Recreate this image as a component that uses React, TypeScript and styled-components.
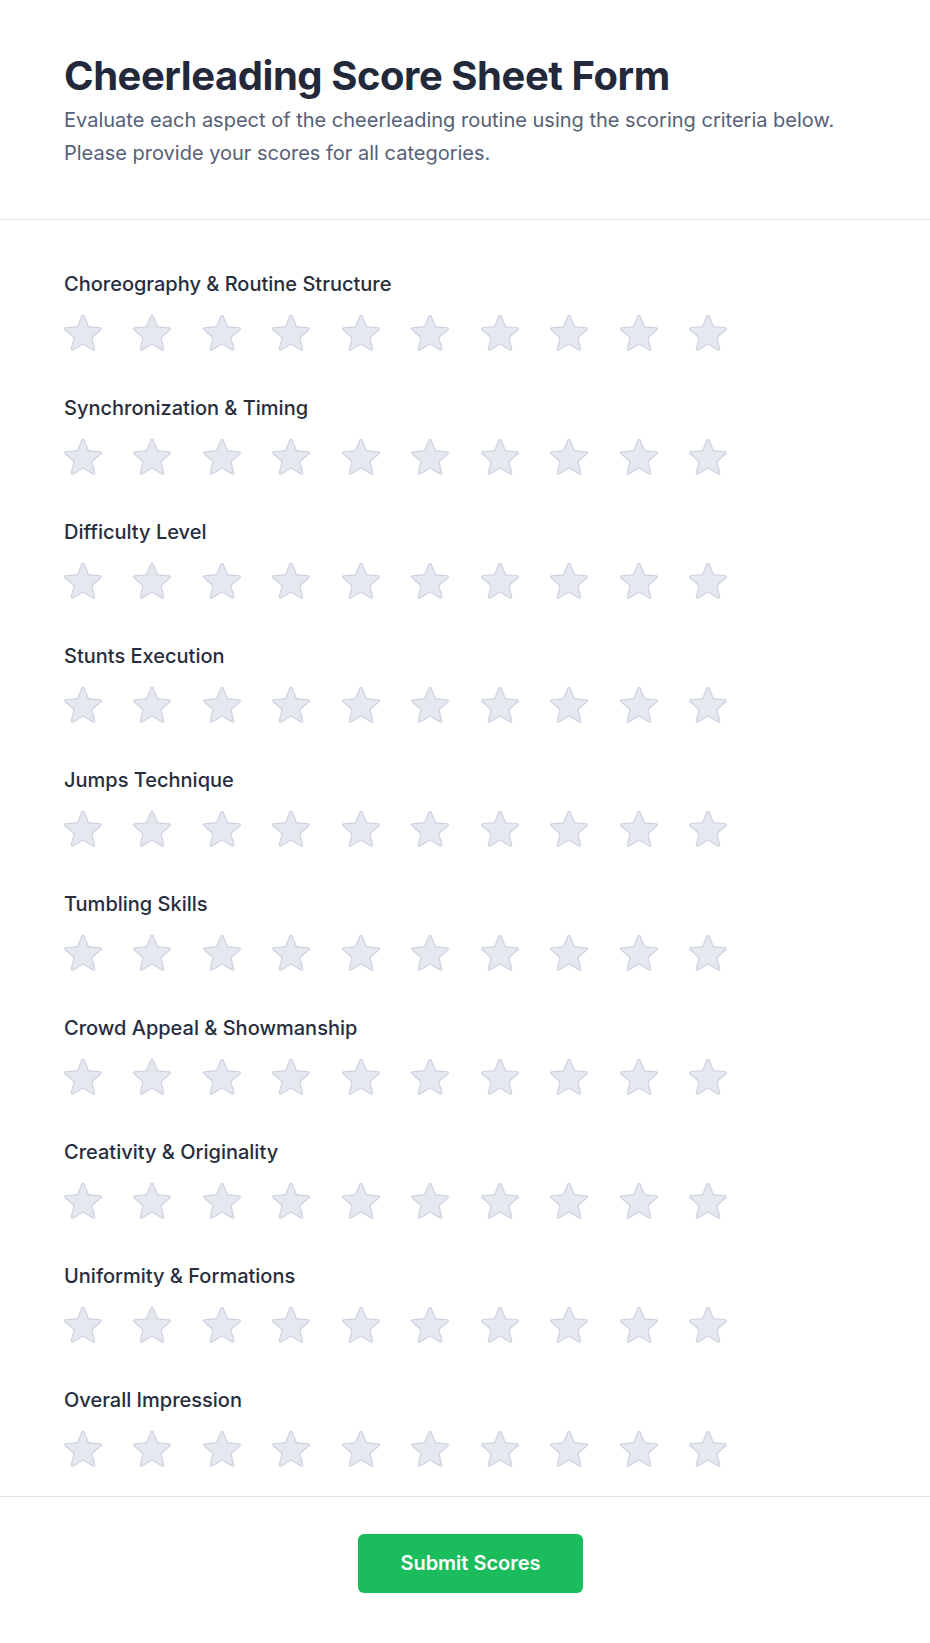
import React from 'react';
import styled, { createGlobalStyle } from 'styled-components';

const categories = [
    'Choreography & Routine Structure',
    'Synchronization & Timing',
    'Difficulty Level',
    'Stunts Execution',
    'Jumps Technique',
    'Tumbling Skills',
    'Crowd Appeal & Showmanship',
    'Creativity & Originality',
    'Uniformity & Formations',
    'Overall Impression',
];

const GlobalStyle = createGlobalStyle`
body {
    margin: 0;
    background: #ffffff;
    font-family: Inter, "Noto Sans", "Liberation Sans", sans-serif;
}
`

const StarIcon = () => (
    <StarSvg viewBox="2.5 3 19 18" aria-hidden="true">
        <path d="M11.48 3.499a.562.562 0 0 1 1.04 0l2.125 5.111a.563.563 0 0 0 .475.345l5.518.442c.499.04.701.663.321.988l-4.204 3.602a.563.563 0 0 0-.182.557l1.285 5.385a.562.562 0 0 1-.84.61l-4.725-2.885a.562.562 0 0 0-.586 0L6.982 20.54a.562.562 0 0 1-.84-.61l1.285-5.386a.562.562 0 0 0-.182-.557l-4.204-3.602a.562.562 0 0 1 .321-.988l5.518-.442a.563.563 0 0 0 .475-.345L11.48 3.5Z" />
    </StarSvg>
);

const App = () => {
    return (
        <>
            <GlobalStyle />
            <Page>
                <Header>
                    <Title>Cheerleading Score Sheet Form</Title>
                    <Subtitle>
                        Evaluate each aspect of the cheerleading routine using the scoring criteria below.
                        <br />
                        Please provide your scores for all categories.
                    </Subtitle>
                </Header>
                <CategoryList>
                    {categories.map((name) => (
                        <Category key={name}>
                            <Label>{name}</Label>
                            <StarRow>
                                {Array.from({ length: 10 }).map((_, i) => (
                                    <StarButton key={i} type="button" aria-label={`${i + 1} stars`}>
                                        <StarIcon />
                                    </StarButton>
                                ))}
                            </StarRow>
                        </Category>
                    ))}
                </CategoryList>
                <Footer>
                    <SubmitButton type="button">Submit Scores</SubmitButton>
                </Footer>
            </Page>
        </>
    )
}

export default App;

const Page = styled.div`
width: 100%;
background: #ffffff;
`

const Header = styled.header`
padding: 52px 64px 50px;
border-bottom: 1px solid #dfe3ec;
`

const Title = styled.h1`
margin: 0;
font-size: 40px;
line-height: 48px;
font-weight: 700;
color: #23283a;
letter-spacing: -0.45px;
`

const Subtitle = styled.p`
margin: 4px 0 0;
font-size: 20px;
line-height: 32.5px;
color: #566077;
`

const CategoryList = styled.div`
display: flex;
flex-direction: column;
gap: 43px;
padding: 50px 64px 29px;
`

const Category = styled.div`
display: flex;
flex-direction: column;
`

const Label = styled.div`
font-size: 20px;
line-height: 28px;
font-weight: 500;
color: #272d3d;
`

const StarRow = styled.div`
display: flex;
gap: 31.45px;
margin-top: 17px;
`

const StarButton = styled.button`
padding: 0;
border: none;
background: none;
display: flex;
cursor: pointer;
`

const StarSvg = styled.svg`
width: 38px;
height: 36px;
fill: #e6e8f0;
stroke: #cbd1df;
stroke-width: 0.55;
stroke-linejoin: round;
`

const Footer = styled.div`
display: flex;
justify-content: center;
padding: 37px 0 50px 11px;
border-top: 1px solid #dfe3ec;
`

const SubmitButton = styled.button`
padding: 14px 42px;
border: none;
border-radius: 6px;
background: #1abc5c;
color: #ffffff;
font-family: Inter, "Noto Sans", "Liberation Sans", sans-serif;
font-size: 20px;
line-height: 31px;
font-weight: 600;
cursor: pointer;
`
